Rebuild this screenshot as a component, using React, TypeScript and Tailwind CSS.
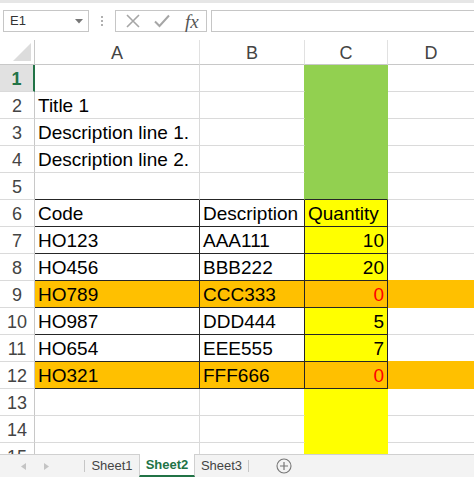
import React from 'react'

type Fill = 'none' | 'green' | 'yellow' | 'orange'
type Line = 'grid' | 'black' | Fill

const FILL: Record<Fill, string> = {
  none: 'bg-white',
  green: 'bg-[#92d050]',
  yellow: 'bg-[#ffff00]',
  orange: 'bg-[#ffc000]',
}
const RIGHT: Record<Line, string> = {
  none: 'border-r-[#dadada]',
  grid: 'border-r-[#dadada]',
  black: 'border-r-[#262626]',
  green: 'border-r-[#92d050]',
  yellow: 'border-r-[#ffff00]',
  orange: 'border-r-[#ffc000]',
}
const BOTTOM: Record<Line, string> = {
  none: 'border-b-[#dadada]',
  grid: 'border-b-[#dadada]',
  black: 'border-b-[#262626]',
  green: 'border-b-[#92d050]',
  yellow: 'border-b-[#ffff00]',
  orange: 'border-b-[#ffc000]',
}

const COLS = ['A', 'B', 'C', 'D']

// contenu des cellules, ligne -> [A, B, C]
const DATA: Record<number, string[]> = {
  2: ['Title 1', '', ''],
  3: ['Description line 1.', '', ''],
  4: ['Description line 2.', '', ''],
  6: ['Code', 'Description', 'Quantity'],
  7: ['HO123', 'AAA111', '10'],
  8: ['HO456', 'BBB222', '20'],
  9: ['HO789', 'CCC333', '0'],
  10: ['HO987', 'DDD444', '5'],
  11: ['HO654', 'EEE555', '7'],
  12: ['HO321', 'FFF666', '0'],
}

const inTable = (r: number, c: number) => r >= 6 && r <= 12 && c <= 2

function fillOf(r: number, c: number): Fill {
  if (r > 15 || c > 3) return 'none'
  if (r === 9 || r === 12) return 'orange'
  if (c === 2) return r <= 5 ? 'green' : 'yellow'
  return 'none'
}

function rightOf(r: number, c: number): Line {
  if (inTable(r, c)) return 'black'
  const next = fillOf(r, c + 1)
  if (next !== 'none') return next
  const own = fillOf(r, c)
  return own !== 'none' ? own : 'grid'
}

function bottomOf(r: number, c: number): Line {
  if (c <= 2 && r >= 5 && r <= 12) return 'black'
  const own = fillOf(r, c)
  if (own !== 'none') return own
  const below = fillOf(r + 1, c)
  return below !== 'none' ? below : 'grid'
}

function clsx(...parts: (string | false | undefined)[]) {
  return parts.filter(Boolean).join(' ')
}

function Cell({ r, c }: { r: number; c: number }) {
  const text = DATA[r]?.[c] ?? ''
  const numeric = c === 2 && r >= 7
  const red = numeric && text === '0'
  return (
    <div
      className={clsx(
        'flex h-[27px] items-end overflow-hidden whitespace-nowrap border-b px-[3px] pb-[1px] text-[19px] leading-[22px]',
        c < 3 && 'border-r',
        FILL[fillOf(r, c)],
        RIGHT[rightOf(r, c)],
        BOTTOM[bottomOf(r, c)],
        numeric && 'justify-end',
        red ? 'text-[#ff0000]' : 'text-black'
      )}
    >
      {text}
    </div>
  )
}

function FormulaBar() {
  return (
    <div className="flex h-[40px] items-start border-t-[3px] border-[#e6e6e6] bg-white pt-[7px]">
      <div className="ml-[3px] flex h-[22px] w-[86px] items-center justify-between border border-[#c6c6c6] pl-[6px] pr-[5px] text-[13px] text-[#333]">
        <span>E1</span>
        <svg width="8" height="5" viewBox="0 0 8 5">
          <path d="M0 0h8L4 4.5z" fill="#777" />
        </svg>
      </div>
      <div className="flex h-[22px] w-[26px] flex-col items-center justify-center gap-[2px]">
        <span className="h-[2px] w-[2px] bg-[#b0b0b0]" />
        <span className="h-[2px] w-[2px] bg-[#b0b0b0]" />
        <span className="h-[2px] w-[2px] bg-[#b0b0b0]" />
      </div>
      <div className="flex h-[22px] w-[92px] items-center border border-[#c6c6c6]">
        <svg width="14" height="14" viewBox="0 0 14 14" className="ml-[10px]">
          <path d="M1 1l12 12M13 1L1 13" stroke="#a6a6a6" strokeWidth="1.6" />
        </svg>
        <svg width="16" height="14" viewBox="0 0 16 14" className="ml-[14px]">
          <path d="M1 7.5l4.5 4.5L15 1.5" stroke="#a6a6a6" strokeWidth="2" fill="none" />
        </svg>
        <span className="ml-[15px] font-['Liberation_Serif',serif] text-[19px] italic leading-none text-[#555]">
          fx
        </span>
      </div>
      <div className="ml-[4px] h-[22px] flex-1 border border-r-0 border-[#c6c6c6]" />
    </div>
  )
}

function SheetTabs() {
  return (
    <div className="flex h-[23px] items-stretch border-t border-[#d0d0d0] bg-[#f3f3f3] text-[13px] text-[#444]">
      <div className="flex w-[84px] items-center gap-[18px] pl-[21px]">
        <svg width="5" height="7" viewBox="0 0 5 7">
          <path d="M5 0v7L0 3.5z" fill="#c4c4c4" />
        </svg>
        <svg width="5" height="7" viewBox="0 0 5 7">
          <path d="M0 0v7l5-3.5z" fill="#c4c4c4" />
        </svg>
      </div>
      <div className="my-[5px] w-px bg-[#c6c6c6]" />
      <div className="flex w-[54px] items-center justify-center">Sheet1</div>
      <div className="-mt-px flex w-[56px] items-center justify-center border-x border-b-2 border-x-[#d0d0d0] border-b-[#217346] bg-white font-bold text-[#217346]">
        Sheet2
      </div>
      <div className="flex w-[53px] items-center justify-center">Sheet3</div>
      <div className="my-[5px] w-px bg-[#c6c6c6]" />
      <div className="flex w-[70px] items-center justify-center">
        <svg width="16" height="16" viewBox="0 0 16 16">
          <circle cx="8" cy="8" r="7" stroke="#777" strokeWidth="1.1" fill="none" />
          <path d="M8 4v8M4 8h8" stroke="#777" strokeWidth="1.2" />
        </svg>
      </div>
    </div>
  )
}

export default function App() {
  const rows = Array.from({ length: 15 }, (_, i) => i + 1)
  return (
    <div className="flex h-[477px] w-[474px] flex-col overflow-hidden bg-white font-['Liberation_Sans',Arial,sans-serif]">
      <FormulaBar />
      <div className="flex-1 overflow-hidden">
        <div className="grid grid-cols-[35px_165px_105px_83px_1fr]">
          {/* en-têtes de colonnes */}
          <div className="relative h-[25px] border-b border-r border-[#c8c8c8]">
            <svg width="18" height="18" viewBox="0 0 18 18" className="absolute bottom-[3px] right-[3px]">
              <path d="M18 0v18H0z" fill="#dcdcdc" />
            </svg>
          </div>
          {COLS.map((c, i) => (
            <div
              key={c}
              className={clsx(
                'flex h-[25px] items-center justify-center border-b border-[#c8c8c8] pt-[2px] text-[18px] text-[#444]',
                i < 3 && 'border-r border-r-[#e1e1e1]'
              )}
            >
              {c}
            </div>
          ))}
          {rows.map((r) => (
            <React.Fragment key={r}>
              <div
                className={clsx(
                  'flex h-[27px] items-center justify-center border-b border-b-[#dadada] pt-[2px] text-[18px]',
                  r === 1
                    ? 'border-r-2 border-r-[#217346] bg-[#e1e1e1] font-bold text-[#217346]'
                    : 'border-r border-r-[#c8c8c8] text-[#444]'
                )}
              >
                {r}
              </div>
              {COLS.map((_, c) => (
                <Cell key={c} r={r} c={c} />
              ))}
            </React.Fragment>
          ))}
        </div>
      </div>
      <SheetTabs />
    </div>
  )
}
